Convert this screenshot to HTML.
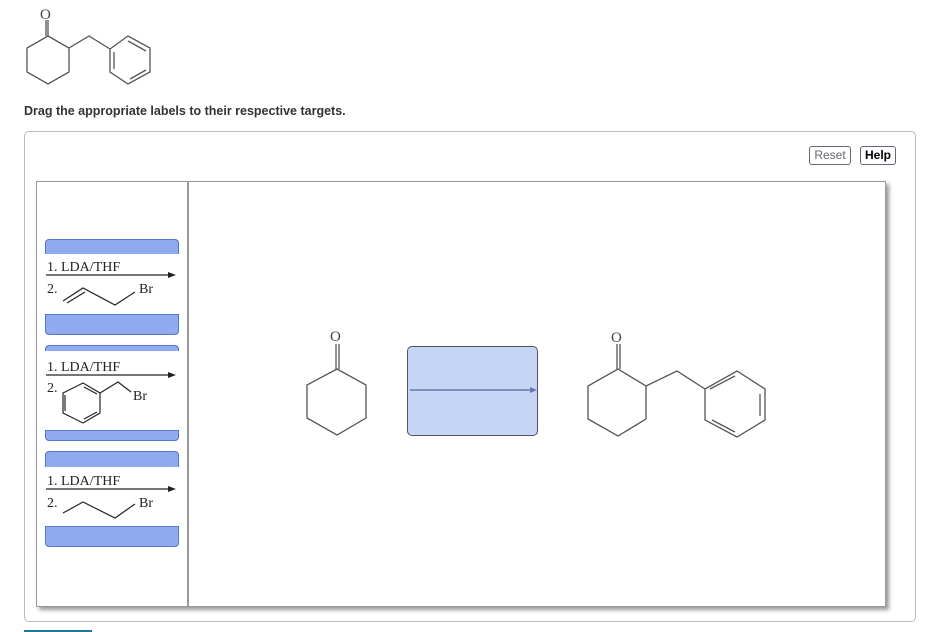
<!DOCTYPE html>
<html><head><style>
body{margin:0;width:936px;height:632px;background:#fff;position:relative;overflow:hidden;font-family:"Liberation Sans",sans-serif}
.a{position:absolute}
.panel{left:24px;top:131px;width:890px;height:489px;border:1px solid #bbb;border-radius:5px}
.btn{top:146px;height:17px;border:1px solid #667;border-radius:3px;font-size:12px;line-height:17px;text-align:center}
.inner{left:36px;top:181px;width:848px;height:424px;border:1px solid #999;box-shadow:3px 3px 4px #999}
.bar{left:45px;width:132px;background:#8faaee;border:1px solid #5577cc}
</style></head><body>
<div class="a" style="left:24px;top:104px;font-size:12.5px;font-weight:bold;color:#333">Drag the appropriate labels to their respective targets.</div>
<div class="a panel"></div>
<div class="a btn" style="left:809px;width:40px;color:#667">Reset</div>
<div class="a btn" style="left:860px;width:34px;color:#000;font-weight:bold">Help</div>
<div class="a inner"></div>
<div class="a" style="left:187px;top:182px;width:2px;height:424px;background:#999"></div>
<div class="a bar" style="top:239px;height:14px;border-radius:4px 4px 0 0;border-bottom:none"></div>
<div class="a bar" style="top:314px;height:19px;border-radius:0 0 4px 4px"></div>
<div class="a bar" style="top:345px;height:5px;border-radius:4px 4px 0 0;border-bottom:none"></div>
<div class="a bar" style="top:430px;height:9px;border-radius:0 0 4px 4px"></div>
<div class="a bar" style="top:451px;height:15px;border-radius:4px 4px 0 0;border-bottom:none"></div>
<div class="a bar" style="top:526px;height:19px;border-radius:0 0 4px 4px"></div>
<div class="a" style="left:407px;top:346px;width:129px;height:88px;background:#c5d5f5;border:1px solid #555;border-radius:5px"></div>
<div class="a" style="left:24px;top:630px;width:68px;height:2px;background:#1a7a9a"></div>
<svg class="a" style="left:0;top:0" width="936" height="632" font-family="Liberation Serif,serif" font-size="14">
<g stroke="#555" stroke-width="1.3" fill="none">
<path d="M48,36 L69,48 L69,72 L48,84 L27,72 L27,48 Z M48,36 L48,20 M46,36 L46,20 M69,48 L89,36 L110,49 M110,49 L128,36 L150,48 L150,72 L128,84 L110,72 Z M114,52 L114,69 M128,41 L146,51 M130,79 L146,70"/>
<path d="M337,369 L366,385 L366,418 L337,435 L307,418 L307,385 Z M336,369 L336,344 M339,369 L339,344"/>
<path d="M618,369 L646,386 L646,419 L618,436 L588,419 L588,386 Z M617,369 L617,344 M620,369 L620,344 M646,386 L677,371 L705,389 M705,389 L737,371 L765,389 L765,420 L737,437 L705,420 Z M710,389 L735,376 M760,394 L760,416 M712,420 L735,432"/>
</g>
<text x="40" y="19" fill="#444" font-size="15">O</text>
<text x="330" y="341" fill="#444" font-size="15">O</text>
<text x="611" y="342" fill="#444" font-size="15">O</text>
<line x1="410" y1="390" x2="532" y2="390" stroke="#6677aa" stroke-width="1.5"/>
<path d="M530,387 L537,390 L530,393 Z" fill="#6677aa"/>
<g fill="#222">
<text x="47" y="271">1. LDA/THF</text><text x="47" y="293">2.</text><text x="139" y="293">Br</text>
<text x="47" y="371">1. LDA/THF</text><text x="47" y="392">2.</text><text x="133" y="400">Br</text>
<text x="47" y="485">1. LDA/THF</text><text x="47" y="507">2.</text><text x="139" y="507">Br</text>
<path d="M168,272 L176,275 L168,278 Z M168,372 L176,375 L168,378 Z M168,486 L176,489 L168,492 Z"/>
</g>
<g stroke="#222" stroke-width="1.2" fill="none">
<path d="M46,275 L170,275 M46,375 L170,375 M46,489 L170,489"/>
<path d="M63,301 L83,288 L115,305 L135,292 M67,303 L85,292"/>
<path d="M63,393 L83,383 L100,393 L100,413 L83,423 L63,413 Z M65,395 L65,411 M84,387 L97,394 M84,419 L97,412 M100,393 L118,382 L131,392"/>
<path d="M63,513 L83,502 L115,518 L135,504"/>
</g>
</svg>
</body></html>
